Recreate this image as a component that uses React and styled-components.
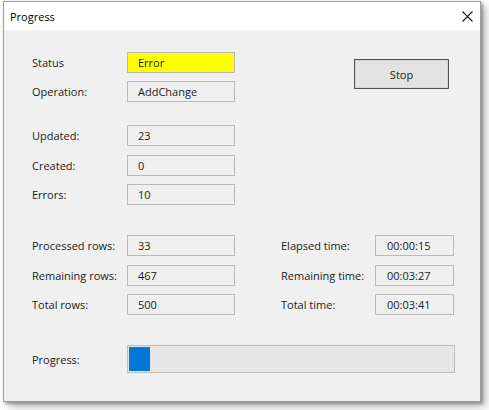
import React from 'react';
import styled, {createGlobalStyle} from 'styled-components';

const stats = {
    status: 'Error',
    operation: 'AddChange',
    updated: 23,
    created: 0,
    errors: 10,
    processed: 33,
    remaining: 467,
    total: 500,
    elapsed: '00:00:15',
    remainingTime: '00:03:27',
    totalTime: '00:03:41'
};

const GlobalStyle = createGlobalStyle`
    html, body {
        margin: 0;
        padding: 0;
        background: #fff;
    }
    body {
        font-family: "Open Sans", "Noto Sans", sans-serif;
        color: #1a1a1a;
    }
`;

const Page = styled.div`
    width: 489px;
    height: 410px;
    padding: 1px 0 0 3px;
    box-sizing: border-box;
    overflow: hidden;
`;

const Window = styled.div`
    width: 478px;
    height: 401px;
    box-sizing: border-box;
    border: 1px solid #9c9c9c;
    background: #f0f0f0;
    box-shadow: 2px 2px 3px rgba(0, 0, 0, .3), 5px 5px 9px rgba(0, 0, 0, .25);
    display: flex;
    flex-direction: column;
`;

const TitleBar = styled.div`
    height: 28px;
    flex-shrink: 0;
    background: #fff;
    display: flex;
    align-items: center;
    justify-content: space-between;
    padding: 0 7px 0 6px;
    font-size: 11px;
    color: #000;
`;

const Body = styled.div`
    padding: 22px 0 0 28px;
    display: flex;
    flex-direction: column;
    font-size: 11px;
`;

const TopSection = styled.div`
    display: flex;
    align-items: flex-start;
`;

const Fields = styled.div`
    display: grid;
    grid-template-columns: ${props => props.wide ? '95px 108px 46px 94px 79px' : '95px 108px'};
    grid-auto-rows: 21px;
    row-gap: ${props => props.gap || 8.5}px;
    align-items: center;
    margin-top: ${props => props.offset || 0}px;
`;

const Label = styled.div`
    white-space: nowrap;
`;

const Box = styled.div`
    height: 21px;
    box-sizing: border-box;
    border: 1px solid #b9b9b9;
    background: ${props => props.highlight ? '#ffff00' : '#f0f0f0'};
    padding-left: ${props => props.small ? '11px' : '10px'};
    display: flex;
    align-items: center;
`;

const StopButton = styled.button`
    margin: 7px 31px 0 auto;
    width: 95px;
    height: 30px;
    box-sizing: border-box;
    border: 1px solid #505050;
    box-shadow: inset 0 0 0 1px #d6d6d6;
    background: #e3e3e3;
    font-family: inherit;
    font-size: 11px;
    color: #1a1a1a;
    padding: 0;
`;

const ProgressRow = styled.div`
    display: flex;
    align-items: center;
    margin-top: 30px;
    ${Label} {
        width: 95px;
    }
`;

const Bar = styled.div`
    width: 328px;
    height: 28px;
    box-sizing: border-box;
    border: 1px solid #bcbcbc;
    background: #e6e6e6;
    padding: 1px;
`;

const Chunk = styled.div`
    height: 100%;
    background: #0078d7;
`;

const CloseIcon = styled.svg`
    width: 11px;
    height: 11px;
`;

class App extends React.Component {
    render() {
        const percent = stats.processed / stats.total * 100;

        return (
            <Page>
                <GlobalStyle/>
                <Window>
                    <TitleBar>
                        <span>Progress</span>
                        <CloseIcon viewBox="0 0 11 11">
                            <path d="M0.5 0.5 L10.5 10.5 M10.5 0.5 L0.5 10.5" stroke="#1a1a1a" strokeWidth="1.1"/>
                        </CloseIcon>
                    </TitleBar>

                    <Body>
                        <TopSection>
                            <Fields gap={8}>
                                <Label>Status</Label>
                                <Box highlight>{stats.status}</Box>
                                <Label>Operation:</Label>
                                <Box>{stats.operation}</Box>
                            </Fields>
                            <StopButton>Stop</StopButton>
                        </TopSection>

                        <Fields offset={23}>
                            <Label>Updated:</Label>
                            <Box>{stats.updated}</Box>
                            <Label>Created:</Label>
                            <Box>{stats.created}</Box>
                            <Label>Errors:</Label>
                            <Box>{stats.errors}</Box>
                        </Fields>

                        <Fields wide offset={30}>
                            <Label>Processed rows:</Label>
                            <Box>{stats.processed}</Box>
                            <span/>
                            <Label>Elapsed time:</Label>
                            <Box small>{stats.elapsed}</Box>

                            <Label>Remaining rows:</Label>
                            <Box>{stats.remaining}</Box>
                            <span/>
                            <Label>Remaining time:</Label>
                            <Box small>{stats.remainingTime}</Box>

                            <Label>Total rows:</Label>
                            <Box>{stats.total}</Box>
                            <span/>
                            <Label>Total time:</Label>
                            <Box small>{stats.totalTime}</Box>
                        </Fields>

                        <ProgressRow>
                            <Label>Progress:</Label>
                            <Bar>
                                <Chunk style={{width: `${percent}%`}}/>
                            </Bar>
                        </ProgressRow>
                    </Body>
                </Window>
            </Page>
        );
    }
}

export default App;
